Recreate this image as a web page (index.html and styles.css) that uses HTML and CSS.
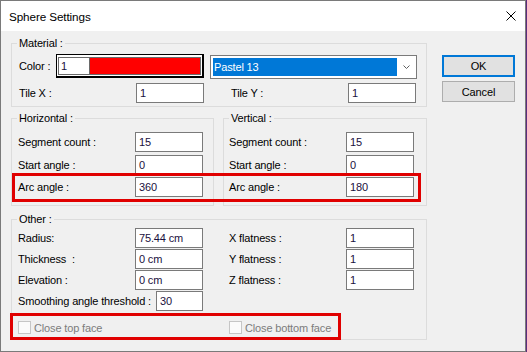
FILE: index.html
```html
<!DOCTYPE html>
<html>
<head>
<meta charset="utf-8">
<title>Sphere Settings</title>
<link rel="stylesheet" href="styles.css">
</head>
<body>
<div class="window">
  <div class="titlebar">
    <span class="title">Sphere Settings</span>
    <svg class="close" width="10" height="10" viewBox="0 0 10 10"><path d="M0.5 0.5 L9.5 9.5 M9.5 0.5 L0.5 9.5" stroke="#000" stroke-width="1" fill="none"/></svg>
  </div>
  <div class="client">
    <div class="main">
      <div class="group material">
        <div class="legend">Material :</div>
        <div class="mat-row1">
          <span class="lbl color-lbl">Color :</span>
          <div class="colorbox"><div class="colorfield"><span class="colornum">1</span><span class="swatch"></span></div></div>
          <div class="combo">
            <span class="combo-sel">Pastel 13</span>
            <span class="combo-arrow"><svg width="7" height="4" viewBox="0 0 7 4"><path d="M0.5 0.5 L3.5 3.5 L6.5 0.5" stroke="#606060" stroke-width="1" fill="none"/></svg></span>
          </div>
        </div>
        <div class="row mat-row2">
          <span class="lbl w117">Tile X :</span><span class="field">1</span>
          <span class="lbl w117 tile-y">Tile Y :</span><span class="field">1</span>
        </div>
      </div>

      <div class="hv">
        <div class="group horiz">
          <div class="legend">Horizontal :</div>
          <div class="rows hv-rows">
            <div class="row"><span class="lbl w117">Segment count :</span><span class="field">15</span></div>
            <div class="row"><span class="lbl w117">Start angle :</span><span class="field">0</span></div>
            <div class="row"><span class="lbl w117">Arc angle :</span><span class="field">360</span></div>
          </div>
        </div>
        <div class="group vert">
          <div class="legend">Vertical :</div>
          <div class="rows hv-rows vert-rows">
            <div class="row"><span class="lbl w117">Segment count :</span><span class="field">15</span></div>
            <div class="row"><span class="lbl w117">Start angle :</span><span class="field">0</span></div>
            <div class="row"><span class="lbl w117">Arc angle :</span><span class="field">180</span></div>
          </div>
        </div>
      </div>

      <div class="group other">
        <div class="legend">Other :</div>
        <div class="rows other-rows">
          <div class="row"><span class="lbl w117">Radius:</span><span class="field">75.44 cm</span><span class="lbl w117 col2">X flatness :</span><span class="field">1</span></div>
          <div class="row"><span class="lbl w117">Thickness &nbsp;:</span><span class="field">0 cm</span><span class="lbl w117 col2">Y flatness :</span><span class="field">1</span></div>
          <div class="row"><span class="lbl w117">Elevation :</span><span class="field">0 cm</span><span class="lbl w117 col2">Z flatness :</span><span class="field">1</span></div>
          <div class="row"><span class="lbl w138">Smoothing angle threshold :</span><span class="field narrow">30</span></div>
        </div>
        <div class="checks">
          <div class="chk chk-first"><span class="box"></span><span class="chk-lbl">Close top face</span></div>
          <div class="chk"><span class="box"></span><span class="chk-lbl">Close bottom face</span></div>
        </div>
      </div>
    </div>

    <div class="buttons">
      <div class="btn btn-default">OK</div>
      <div class="btn btn-cancel">Cancel</div>
    </div>
  </div>

  <div class="highlight hl-arc"></div>
  <div class="highlight hl-faces"></div>
</div>
</body>
</html>
```
FILE: styles.css
```css
* { box-sizing: border-box; }
html, body { margin: 0; padding: 0; }
body {
  width: 527px;
  height: 352px;
  overflow: hidden;
  background: #5b2c7c;
  font-family: "Liberation Sans", Arial, sans-serif;
  font-size: 11px;
  letter-spacing: -0.15px;
  color: #000;
}
.window {
  position: relative;
  width: 526px;
  height: 352px;
  border: 1px solid #7a7a7a;
  background: #f0f0f0;
  display: flex;
  flex-direction: column;
}
.titlebar {
  flex: none;
  height: 30px;
  background: #fff;
  display: flex;
  align-items: center;
  justify-content: space-between;
  padding: 0 9px 0 8px;
}
.title { font-size: 11.7px; letter-spacing: -0.1px; }
.close { display: block; }

.client {
  flex: 1;
  display: flex;
  gap: 15px;
  padding: 12px 0 0 10px;
}
.main { width: 416px; flex: none; display: flex; flex-direction: column; }

.group {
  border: 1px solid #dcdcdc;
  display: flex;
  flex-direction: column;
}
.legend {
  align-self: flex-start;
  height: 13px;
  line-height: 13px;
  margin: -7px 0 -6px 5px;
  padding: 0 2px;
  background: #f0f0f0;
  white-space: nowrap;
}

.row { display: flex; align-items: center; height: 20px; }
.lbl { flex: none; white-space: nowrap; }
.w117 { width: 117px; }
.w138 { width: 138px; }
.field {
  flex: none;
  width: 68px;
  height: 20px;
  border: 1px solid #7a7a7a;
  background: #fff;
  padding-left: 3px;
  line-height: 18px;
  color: #1a1040;
  white-space: nowrap;
}
.field.narrow { width: 47px; }

/* Material */
.material { height: 64px; }
.mat-row1 {
  margin-top: 10px;
  height: 25px;
  display: flex;
  align-items: flex-start;
  padding-left: 7px;
}
.color-lbl { width: 37px; height: 24px; line-height: 24px; }
.colorbox {
  flex: none;
  width: 148px;
  height: 24px;
  border: 1px solid #000;
  border-right-width: 2px;
  border-bottom-width: 2px;
  background: #fff;
  padding: 2px 1px 1px 1px;
}
.colorfield {
  display: flex;
  height: 100%;
  border: 1px solid #6a6a6a;
}
.colornum {
  width: 31px;
  border-right: 1px solid #6a6a6a;
  background: #fff;
  padding-left: 2px;
  line-height: 16px;
  color: #1a1040;
}
.swatch { flex: 1; background: #ff0000; }
.combo {
  flex: none;
  width: 207px;
  height: 24px;
  margin: 1px 0 0 6px;
  border: 1px solid #7a7a7a;
  background: #fff;
  padding: 2px 0 2px 2px;
  display: flex;
}
.combo-sel {
  width: 184px;
  height: 18px;
  line-height: 18px;
  background: #0078d7;
  color: #fff;
  padding-left: 1px;
}
.combo-arrow {
  flex: 1;
  display: flex;
  align-items: center;
  justify-content: center;
}
.combo-arrow svg { display: block; }
.mat-row2 { margin-top: 4px; padding-left: 7px; }
.tile-y { margin-left: 27px; }

/* Horizontal / Vertical */
.hv { display: flex; gap: 9px; margin-top: 11px; }
.horiz { width: 203px; height: 88px; flex: none; }
.vert { width: 204px; height: 88px; flex: none; }
.rows { display: flex; flex-direction: column; }
.hv-rows { margin-top: 13px; gap: 2.5px; padding-left: 6px; }
.vert-rows { padding-left: 5px; }

/* Other */
.other { margin-top: 13px; height: 121px; }
.other-rows { margin-top: 8px; gap: 1px; padding-left: 6px; }
.col2 { margin-left: 26px; }
.checks {
  margin-top: 10px;
  height: 13px;
  display: flex;
  align-items: center;
  padding-left: 6px;
}
.chk { flex: none; display: flex; align-items: center; gap: 3px; }
.chk-first { width: 211px; }
.box {
  flex: none;
  width: 13px;
  height: 13px;
  border: 1px solid #c6c6c6;
  background: #fbfbfb;
}
.chk-lbl { color: #7c7c7c; white-space: nowrap; }

/* Buttons */
.buttons {
  width: 73px;
  flex: none;
  margin-top: 12px;
  display: flex;
  flex-direction: column;
  gap: 4px;
}
.btn {
  display: flex;
  align-items: center;
  justify-content: center;
  background: #e1e1e1;
}
.btn-default { height: 22px; border: 2px solid #0078d7; }
.btn-cancel { height: 21px; border: 1px solid #adadad; }

/* Annotation boxes drawn over the dialog */
.highlight {
  position: absolute;
  border: 3px solid #e00000;
}
.hl-arc { left: 11px; top: 172px; width: 409px; height: 29px; }
.hl-faces { left: 9px; top: 312px; width: 331px; height: 27px; }
```
